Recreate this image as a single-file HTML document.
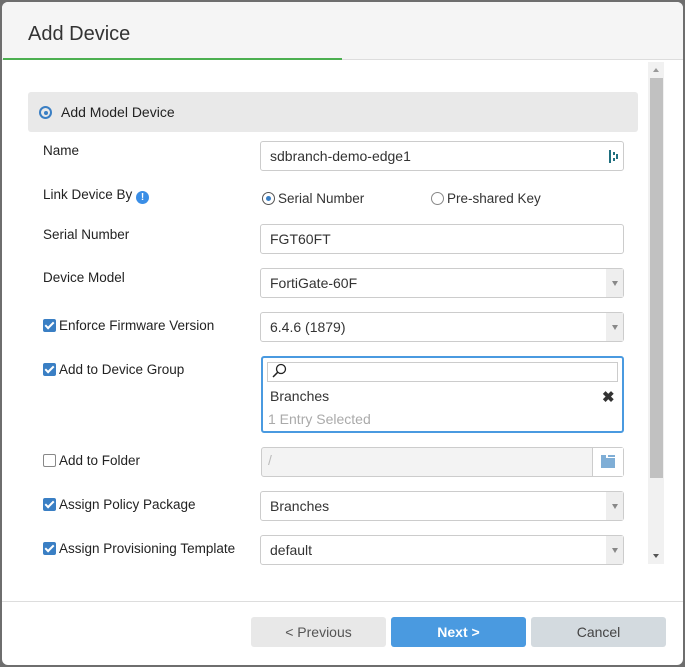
<!DOCTYPE html>
<html><head><meta charset="utf-8"><style>
*{box-sizing:border-box;margin:0;padding:0}
body{width:685px;height:667px;background:#6e6e6e;font-family:"Liberation Sans",sans-serif;font-size:14px;color:#333;position:relative;overflow:hidden}
.dlg{position:absolute;left:2px;top:2px;width:681px;height:663px;background:#fff;border-radius:6px;overflow:hidden}
.in{position:absolute;left:-2px;top:-2px;width:685px;height:667px}
.hdr{position:absolute;left:0;top:0;width:685px;height:60px;background:#f5f5f5;border-bottom:1px solid #ddd}
.hdr h1{position:absolute;left:28px;top:23px;font-weight:normal;font-size:20px;color:#333}
.green{position:absolute;left:3px;top:58px;width:339px;height:2px;background:#4caf50}
.a{position:absolute}
.lbl{position:absolute;left:43px;font-size:13.5px;color:#222}
.inp{position:absolute;left:260px;width:364px;height:30px;border:1px solid #ccc;border-radius:3px;background:#fff;font-size:14px;padding:6px 9px;color:#333}
.sel::after{content:"";position:absolute;right:0;top:0;width:17px;height:28px;background:#eee}
.sel::before{content:"";position:absolute;right:5px;top:12px;border:3.5px solid transparent;border-top:5px solid #888;z-index:2}
.cb{display:inline-block;width:13px;height:13px;border-radius:2px;background:#3a7fc4;vertical-align:-2px;margin-right:3px;position:relative}
.cb::after{content:"";position:absolute;left:4px;top:1px;width:3px;height:7px;border:solid #fff;border-width:0 2px 2px 0;transform:rotate(45deg)}
.cb.off{background:#fff;border:1.5px solid #888}
.cb.off::after{display:none}
.btn{position:absolute;top:617px;width:135px;height:30px;border-radius:3px;font-size:14px;text-align:center;line-height:30px}
</style></head><body>
<div class="dlg"><div class="in">
<div class="hdr"><h1>Add Device</h1></div>
<div class="green"></div>
<div class="a" style="left:648px;top:62px;width:16px;height:502px;background:#f1f1f1"></div>
<div class="a" style="left:650px;top:78px;width:13px;height:400px;background:#c1c1c1"></div>
<div class="a" style="left:653px;top:68px;border:3px solid transparent;border-bottom:4px solid #999;border-top:0"></div>
<div class="a" style="left:653px;top:554px;border:3.5px solid transparent;border-top:4px solid #555;border-bottom:0"></div>

<div class="a" style="left:28px;top:92px;width:610px;height:40px;background:#e9e9e9;border-radius:3px"></div>
<div class="a" style="left:39px;top:106px;width:13px;height:13px;border-radius:50%;border:2px solid #3a7fc4"><div style="position:absolute;left:2.5px;top:2.5px;width:4px;height:4px;border-radius:50%;background:#3a7fc4"></div></div>
<div class="a" style="left:61px;top:104px;font-size:14px;color:#222">Add Model Device</div>

<div class="lbl" style="top:143px">Name</div>
<div class="inp" style="top:141px">sdbranch-demo-edge1
<svg class="a" style="right:4px;top:8px" width="10" height="13"><rect x="0" y="0" width="2" height="13" fill="#1f6f7f"/><rect x="4" y="2" width="2" height="3" fill="#1f6f7f"/><rect x="4" y="8" width="2" height="3" fill="#1f6f7f"/><rect x="7" y="4" width="2" height="5" fill="#1f6f7f"/></svg></div>

<div class="lbl" style="top:187px">Link Device By <span style="display:inline-block;width:13px;height:13px;border-radius:50%;background:#3a8ee6;color:#fff;font-size:10px;font-weight:bold;text-align:center;line-height:13px;vertical-align:-1px">!</span></div>
<div class="a" style="left:262px;top:192px;width:13px;height:13px;border-radius:50%;border:1.5px solid #555"><div style="position:absolute;left:2.5px;top:2.5px;width:5px;height:5px;border-radius:50%;background:#3a7fc4"></div></div>
<div class="a" style="left:278px;top:191px;font-size:13.5px">Serial Number</div>
<div class="a" style="left:431px;top:192px;width:13px;height:13px;border-radius:50%;border:1.5px solid #888"></div>
<div class="a" style="left:447px;top:191px;font-size:13.5px">Pre-shared Key</div>

<div class="lbl" style="top:227px">Serial Number</div>
<div class="inp" style="top:224px">FGT60FT</div>

<div class="lbl" style="top:270px">Device Model</div>
<div class="inp sel" style="top:268px">FortiGate-60F</div>

<div class="lbl" style="top:318px"><span class="cb"></span>Enforce Firmware Version</div>
<div class="inp sel" style="top:312px">6.4.6 (1879)</div>

<div class="lbl" style="top:362px"><span class="cb"></span>Add to Device Group</div>
<div class="a" style="left:261px;top:356px;width:363px;height:77px;border:2px solid #4a9ae0;border-radius:3px"></div>
<div class="a" style="left:267px;top:362px;width:351px;height:20px;border:1px solid #ccc"></div>
<svg class="a" style="left:271px;top:363px" width="16" height="16"><circle cx="10" cy="6" r="4.5" fill="none" stroke="#222" stroke-width="1.3"/><line x1="6.8" y1="9.2" x2="2" y2="14" stroke="#222" stroke-width="1.5"/></svg>
<div class="a" style="left:270px;top:388px;font-size:14px">Branches</div>
<div class="a" style="left:602px;top:388px;font-size:15px;font-weight:bold;color:#333">✖</div>
<div class="a" style="left:268px;top:411px;font-size:14px;color:#aaa">1 Entry Selected</div>

<div class="lbl" style="top:453px"><span class="cb off"></span>Add to Folder</div>
<div class="a" style="left:261px;top:447px;width:363px;height:30px;border:1px solid #ccc;border-radius:3px;background:#f3f3f3"></div>
<div class="a" style="left:592px;top:448px;width:31px;height:28px;background:#fff;border-left:1px solid #ccc"></div>
<svg class="a" style="left:601px;top:455px" width="14" height="13"><path d="M0 0H5V3H14V13H0Z" fill="#7faed6"/><rect x="7" y="0" width="7" height="2" fill="#7faed6"/></svg>
<div class="a" style="left:268px;top:452px;color:#bbb">/</div>

<div class="lbl" style="top:497px"><span class="cb"></span>Assign Policy Package</div>
<div class="inp sel" style="top:491px">Branches</div>

<div class="lbl" style="top:541px"><span class="cb"></span>Assign Provisioning Template</div>
<div class="inp sel" style="top:535px">default</div>

<div class="a" style="left:0;top:601px;width:685px;height:1px;background:#ddd"></div>
<div class="btn" style="left:251px;background:#e8e8e8;color:#555">&lt; Previous</div>
<div class="btn" style="left:391px;background:#4a9ae0;color:#fff;font-weight:bold">Next &gt;</div>
<div class="btn" style="left:531px;background:#d3dadf;color:#444">Cancel</div>
</div></div>
</body></html>
